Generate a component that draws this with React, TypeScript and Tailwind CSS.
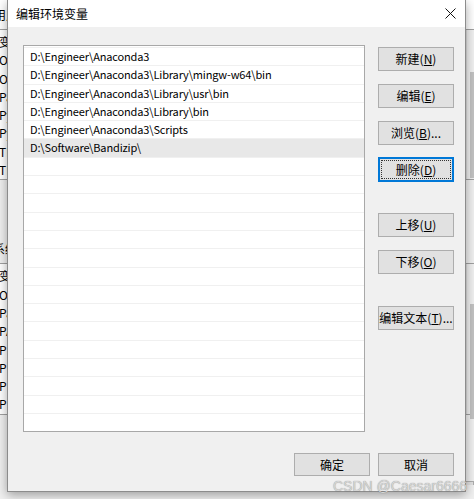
import React from "react";

const paths = [
  "D:\\Engineer\\Anaconda3",
  "D:\\Engineer\\Anaconda3\\Library\\mingw-w64\\bin",
  "D:\\Engineer\\Anaconda3\\Library\\usr\\bin",
  "D:\\Engineer\\Anaconda3\\Library\\bin",
  "D:\\Engineer\\Anaconda3\\Scripts",
  "D:\\Software\\Bandizip\\",
];

const userVars = ["变量", "OneDrive", "OneDriveConsumer", "Path", "PyCharm", "PyCharm Community", "TEMP", "TMP"];
const sysVars = ["变量", "OS", "Path", "PATHEXT", "PROCESSOR_ARCHITECTURE", "PROCESSOR_IDENTIFIER", "PROCESSOR_LEVEL", "PROCESSOR_REVISION"];

function Btn({
  label,
  mn,
  tail = "",
  focused = false,
}: {
  label: string;
  mn?: string;
  tail?: string;
  focused?: boolean;
}) {
  const text = (
    <span className="text-[12px] text-black">
      {label}
      {mn && (
        <>
          (<span className="underline">{mn}</span>)
        </>
      )}
      {tail}
    </span>
  );
  return focused ? (
    <div className="w-[76px] h-[25px] border-2 border-[#0078d7] bg-[#e1e1e1] p-[1px] flex">
      <div className="flex-1 border border-dotted border-[#333] flex items-center justify-center">{text}</div>
    </div>
  ) : (
    <div className="w-[76px] h-[24px] border border-[#adadad] bg-[#e1e1e1] flex items-center justify-center">
      {text}
    </div>
  );
}

function BgList({ items, thumbTop, thumbH }: { items: string[]; thumbTop: string; thumbH: string }) {
  return (
    <div className="relative flex bg-white border-y border-[#a0a0a0]">
      <div className="flex-1 pt-[3px]">
        {items.map((t, i) => (
          <div key={i} className="h-[18.3px] leading-[18px] text-[12px] text-black -ml-[1px] whitespace-nowrap">
            {t}
          </div>
        ))}
      </div>
      <div className="w-[8px] bg-[#f0f0f0] border-l border-[#dcdcdc] relative">
        <div className={`absolute left-[3px] w-[5px] bg-[#c2c2c2] ${thumbTop} ${thumbH}`} />
      </div>
    </div>
  );
}

export default function App() {
  const rows = Array.from({ length: 22 });
  return (
    <div className="relative w-[474px] h-[499px] overflow-hidden bg-[#f0f0f0] font-['Microsoft_YaHei','Noto_Sans_CJK_SC',sans-serif]">
      {/* background window */}
      <div className="flex flex-col">
        <div className="h-[29px] bg-white flex items-center text-[12px] -ml-[6px]">用户变量</div>
        <BgList items={userVars} thumbTop="top-[42px]" thumbH="h-[106px]" />
        <div className="h-[83px] flex items-end pb-[5px] text-[12px] -ml-[7px]">系统变量</div>
        <BgList items={sysVars} thumbTop="top-[40px]" thumbH="h-[115px]" />
        <div className="h-[70px] flex items-end gap-[8px] pl-[322px]">
          <div className="w-[75px] h-[4px] border border-b-0 border-[#adadad] bg-[#e1e1e1]" />
          <div className="w-[75px] h-[4px] border border-b-0 border-[#adadad] bg-[#e1e1e1]" />
        </div>
      </div>

      {/* dialog */}
      <div className="absolute left-[7px] top-0 w-[459px] h-[492px] border border-t-0 border-[#8c8c8c] shadow-[0_3px_10px_rgba(0,0,0,0.35)] flex flex-col">
        <div className="h-[27px] bg-white flex items-center justify-between px-[8px]">
          <span className="text-[12px] text-black">编辑环境变量</span>
          <svg width="11" height="11" viewBox="0 0 11 11" className="mr-[1px]">
            <path d="M0.5 0.5L10.5 10.5M10.5 0.5L0.5 10.5" stroke="#111" strokeWidth="1" />
          </svg>
        </div>
        <div className="flex-1 bg-[#f0f0f0] flex flex-col pl-[15px] pr-[11px] pt-[18px]">
          <div className="flex gap-[13px]">
            <div className="w-[343px] h-[387px] border border-[#a8a8a8] bg-white overflow-hidden pt-[1px]">
              {rows.map((_, i) => (
                <div
                  key={i}
                  className={`h-[18.3px] border-t border-[#f0f0f0] pl-[6px] text-[11px] leading-[17px] tracking-[-0.15px] text-black whitespace-nowrap ${
                    i === 5 ? "bg-[#e8e8e8]" : ""
                  }`}
                >
                  {paths[i] ?? ""}
                </div>
              ))}
            </div>
            <div className="flex flex-col pt-[2px]">
              <Btn label="新建" mn="N" />
              <div className="h-[13px]" />
              <Btn label="编辑" mn="E" />
              <div className="h-[13px]" />
              <Btn label="浏览" mn="B" tail="..." />
              <div className="h-[12px]" />
              <Btn label="删除" mn="D" focused />
              <div className="h-[31px]" />
              <Btn label="上移" mn="U" />
              <div className="h-[13px]" />
              <Btn label="下移" mn="O" />
              <div className="h-[32px]" />
              <Btn label="编辑文本" mn="T" tail="..." />
            </div>
          </div>
          <div className="flex justify-end gap-[8px] mt-[21px]">
            <div className="w-[76px] h-[23px] border border-[#adadad] bg-[#e1e1e1] flex items-center justify-center text-[12px] text-black">
              确定
            </div>
            <div className="w-[76px] h-[23px] border border-[#adadad] bg-[#e1e1e1] flex items-center justify-center text-[12px] text-black">
              取消
            </div>
          </div>
        </div>
      </div>

      {/* watermark */}
      <div className="absolute left-[333px] top-[477px] text-[14px] leading-[18px] text-[#d6d6d6] font-['Liberation_Sans',sans-serif] [text-shadow:0_0_1px_rgba(0,0,0,0.45)] whitespace-nowrap">
        CSDN @Caesar6666
      </div>
    </div>
  );
}
